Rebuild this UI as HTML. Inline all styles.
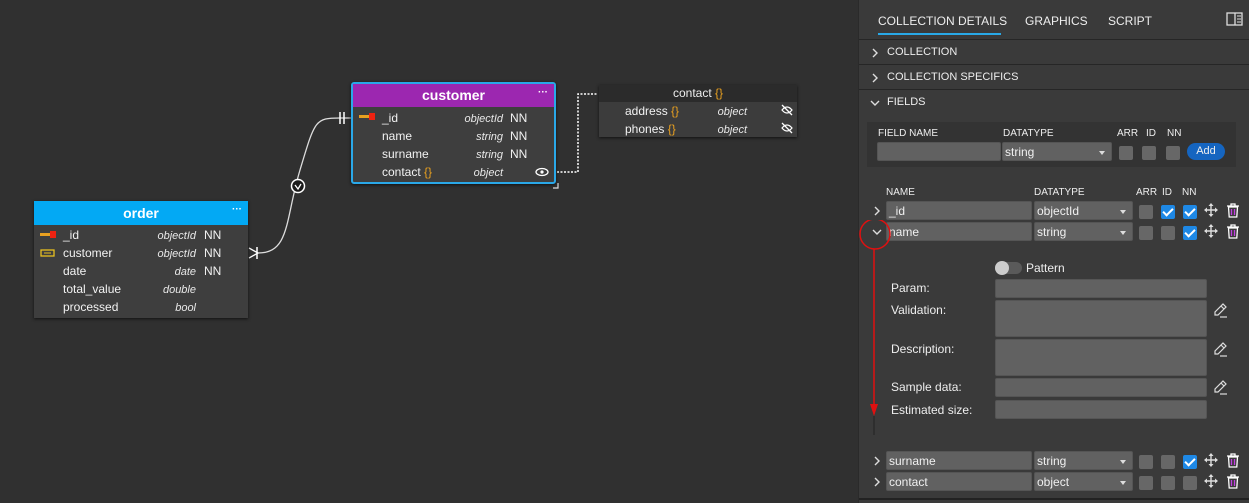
<!DOCTYPE html>
<html><head><meta charset="utf-8"><style>
*{box-sizing:border-box;margin:0;padding:0}
body{width:1249px;height:503px;background:#303030;font-family:"Liberation Sans","DejaVu Sans",sans-serif;font-size:12px;color:#eee;position:relative;overflow:hidden}
.a{position:absolute}
.tbl{position:absolute;background:#3e3e3e;box-shadow:0 1px 3px #111}
.hd{position:absolute;left:0;right:0;top:0;text-align:center;font-weight:bold;font-size:14px;color:#fff}
.r{position:absolute;font-size:12px;line-height:14px;color:#f2f2f2;white-space:nowrap}
.t{position:absolute;font-style:italic;font-size:11px;line-height:14px;color:#e8e8e8;text-align:right;margin-top:1px}
.br{color:#e8a020}
.panel{position:absolute;left:858px;top:0;width:391px;height:503px;background:#3a3a3a;border-left:1px solid #2a2a2a}
.sep{position:absolute;left:0;right:0;height:1px;background:#262626}
.inp{position:absolute;background:#616161;border:1px solid #555;border-radius:2px;color:#f0f0f0;font-size:12px;padding:2px 2px;line-height:14px}
.cb{position:absolute;width:14px;height:14px;background:#676767;border-radius:2px}
.cb.on{background:#1e88e5}
.cb.on:after{content:"";position:absolute;left:4px;top:1px;width:4px;height:8px;border:solid #fff;border-width:0 2px 2px 0;transform:rotate(45deg)}
.sel:after{content:"";position:absolute;right:6px;top:8px;border:3px solid transparent;border-top:4px solid #ddd}
.lbl{position:absolute;font-size:10px;color:#eee}
.chev{position:absolute}
</style></head><body>

<svg width="0" height="0" style="position:absolute">
<defs>
<g id="mv"><path d="M7 1 V13 M1 7 H13" stroke="#ddd" stroke-width="1.4"/><path d="M7 0 L4.5 3 H9.5Z M7 14 L4.5 11 H9.5Z M0 7 L3 4.5 V9.5Z M14 7 L11 4.5 V9.5Z" fill="#ddd"/></g>
<g id="tr"><path d="M1 3 H13 M5 3 V1 H9 V3" stroke="#fff" stroke-width="1.3" fill="none"/><path d="M2.5 4 H11.5 L10.8 14 H3.2Z" fill="none" stroke="#fff" stroke-width="1.3"/><path d="M5.5 6 V12 M8.5 6 V12" stroke="#c040e0" stroke-width="1.3"/></g>
<g id="cr"><path d="M1 1 L5 5 L1 9" stroke="#ddd" stroke-width="1.4" fill="none"/></g>
<g id="cd"><path d="M1 1 L5 5 L9 1" stroke="#ddd" stroke-width="1.4" fill="none"/></g>
<g id="pen"><path d="M3 13 L3 10 L11 2 L14 5 L6 13Z M9 4 L12 7" stroke="#ddd" stroke-width="1.2" fill="none"/><path d="M8 15 H15" stroke="#ddd" stroke-width="1.2"/></g>
</defs></svg>

<!-- connectors -->
<svg class="a" style="left:0;top:0" width="860" height="503">
<path d="M258 253 C 290 253, 285 220, 300 170 C 315 120, 315 118, 340 118 L351 118" stroke="#ddd" stroke-width="1.3" fill="none"/>
<line x1="340" y1="112" x2="340" y2="124" stroke="#fff" stroke-width="1.5"/>
<line x1="344" y1="112" x2="344" y2="124" stroke="#fff" stroke-width="1.5"/>
<line x1="257" y1="247" x2="257" y2="259" stroke="#fff" stroke-width="1.5"/>
<path d="M249 248 L258 253 L249 258" stroke="#fff" stroke-width="1.3" fill="none"/>
<circle cx="298" cy="186" r="6.5" fill="#1a1a1a" stroke="#fff" stroke-width="1.5"/>
<path d="M295 185 L298 189 L301 184" stroke="#fff" stroke-width="1.3" fill="none"/>
<path d="M557 172 L578 172 L578 94 L598 94" stroke="#fff" stroke-width="1.5" stroke-dasharray="2 1.5" fill="none"/>
<path d="M553 188 L558 188 L558 183" stroke="#ddd" stroke-width="1.2" fill="none"/>
</svg>

<!-- customer -->
<div class="tbl" style="left:351px;top:82px;width:205px;height:102px;border:2px solid #2aa8e8;border-radius:3px">
<div class="hd" style="background:#9c27b0;height:23px;line-height:23px">customer<span style="position:absolute;right:6px;font-size:10px;top:-3px">···</span></div>
<svg class="a" style="left:6px;top:29px" width="16" height="8"><rect x="0" y="2" width="10" height="3" fill="#e8a020"/><rect x="10" y="0" width="6" height="7" fill="#e21"/></svg>
<div class="r" style="left:29px;top:27px">_id</div><div class="t" style="left:80px;width:70px;top:27px">objectId</div><div class="r" style="left:157px;top:27px">NN</div>
<div class="r" style="left:29px;top:45px">name</div><div class="t" style="left:80px;width:70px;top:45px">string</div><div class="r" style="left:157px;top:45px">NN</div>
<div class="r" style="left:29px;top:63px">surname</div><div class="t" style="left:80px;width:70px;top:63px">string</div><div class="r" style="left:157px;top:63px">NN</div>
<div class="r" style="left:29px;top:81px">contact <span class="br">{}</span></div><div class="t" style="left:80px;width:70px;top:81px">object</div>
<svg class="a" style="left:182px;top:83px" width="14" height="10"><ellipse cx="7" cy="5" rx="6" ry="3.5" fill="none" stroke="#fff" stroke-width="1.3"/><circle cx="7" cy="5" r="1.6" fill="#fff"/></svg>
</div>

<!-- contact -->
<div class="tbl" style="left:599px;top:85px;width:198px;height:52px;background:#3c3c3c">
<div style="position:absolute;left:0;right:0;top:0;height:17px;background:#2b2b2b;text-align:center;font-size:12px;line-height:17px">contact <span class="br">{}</span></div>
<div class="r" style="left:26px;top:19px">address <span class="br">{}</span></div><div class="t" style="left:100px;width:48px;top:19px">object</div>
<svg class="a" style="left:182px;top:19px" width="12" height="12"><path d="M1 6 Q6 0 11 6 Q6 12 1 6Z" fill="none" stroke="#fff" stroke-width="1.2"/><line x1="1" y1="1" x2="11" y2="11" stroke="#fff" stroke-width="1.3"/></svg>
<div class="r" style="left:26px;top:37px">phones <span class="br">{}</span></div><div class="t" style="left:100px;width:48px;top:37px">object</div>
<svg class="a" style="left:182px;top:37px" width="12" height="12"><path d="M1 6 Q6 0 11 6 Q6 12 1 6Z" fill="none" stroke="#fff" stroke-width="1.2"/><line x1="1" y1="1" x2="11" y2="11" stroke="#fff" stroke-width="1.3"/></svg>
</div>

<!-- order -->
<div class="tbl" style="left:34px;top:201px;width:214px;height:117px">
<div class="hd" style="background:#03a9f4;height:24px;line-height:24px">order<span style="position:absolute;right:6px;font-size:10px;top:-3px">···</span></div>
<svg class="a" style="left:6px;top:30px" width="16" height="8"><rect x="0" y="2" width="10" height="3" fill="#e8a020"/><rect x="10" y="0" width="6" height="7" fill="#e21"/></svg>
<svg class="a" style="left:6px;top:48px" width="16" height="8"><rect x="1" y="1" width="13" height="6" fill="none" stroke="#e8c020" stroke-width="1.3"/><line x1="4" y1="4" x2="11" y2="4" stroke="#e8c020"/></svg>
<div class="r" style="left:29px;top:27px">_id</div><div class="t" style="left:90px;width:72px;top:27px">objectId</div><div class="r" style="left:170px;top:27px">NN</div>
<div class="r" style="left:29px;top:45px">customer</div><div class="t" style="left:90px;width:72px;top:45px">objectId</div><div class="r" style="left:170px;top:45px">NN</div>
<div class="r" style="left:29px;top:63px">date</div><div class="t" style="left:90px;width:72px;top:63px">date</div><div class="r" style="left:170px;top:63px">NN</div>
<div class="r" style="left:29px;top:81px">total_value</div><div class="t" style="left:90px;width:72px;top:81px">double</div>
<div class="r" style="left:29px;top:99px">processed</div><div class="t" style="left:90px;width:72px;top:99px">bool</div>
</div>

<!-- panel -->
<div class="panel">
<div class="a" style="left:19px;top:14px;font-size:12px">COLLECTION DETAILS</div>
<div class="a" style="left:19px;top:33px;width:123px;height:2px;background:#29a9e8"></div>
<div class="a" style="left:166px;top:14px;font-size:12px">GRAPHICS</div>
<div class="a" style="left:249px;top:14px;font-size:12px">SCRIPT</div>
<svg class="a" style="left:367px;top:12px" width="17" height="14"><rect x="1" y="1" width="15" height="12" fill="none" stroke="#ddd" stroke-width="1.3"/><line x1="9" y1="1" x2="9" y2="13" stroke="#ddd" stroke-width="1.3"/><line x1="11" y1="4" x2="15" y2="4" stroke="#ddd"/><line x1="11" y1="7" x2="15" y2="7" stroke="#ddd"/><line x1="11" y1="10" x2="15" y2="10" stroke="#ddd"/></svg>
<div class="sep" style="top:39px"></div>
<svg class="chev" style="left:13px;top:48px" width="8" height="11"><use href="#cr"/></svg><div class="a" style="left:28px;top:46px;font-size:11px">COLLECTION</div>
<div class="sep" style="top:64px"></div>
<svg class="chev" style="left:13px;top:73px" width="8" height="11"><use href="#cr"/></svg><div class="a" style="left:28px;top:71px;font-size:11px">COLLECTION SPECIFICS</div>
<div class="sep" style="top:89px"></div>
<svg class="chev" style="left:11px;top:100px" width="11" height="8"><use href="#cd"/></svg><div class="a" style="left:28px;top:96px;font-size:11px">FIELDS</div>

<div class="a" style="left:8px;top:122px;width:369px;height:45px;background:#333"></div>
<div class="lbl" style="left:19px;top:128px">FIELD NAME</div>
<div class="lbl" style="left:144px;top:128px">DATATYPE</div>
<div class="lbl" style="left:258px;top:128px">ARR</div><div class="lbl" style="left:287px;top:128px">ID</div><div class="lbl" style="left:308px;top:128px">NN</div>
<div class="inp" style="left:18px;top:142px;width:124px;height:19px"></div>
<div class="inp sel" style="left:143px;top:142px;width:110px;height:19px">string</div>
<div class="cb" style="left:260px;top:146px"></div><div class="cb" style="left:283px;top:146px"></div><div class="cb" style="left:307px;top:146px"></div>
<div class="a" style="left:328px;top:143px;width:38px;height:17px;background:#1565c0;border-radius:9px;font-size:11px;text-align:center;line-height:17px">Add</div>

<div class="lbl" style="left:27px;top:187px">NAME</div>
<div class="lbl" style="left:175px;top:187px">DATATYPE</div>
<div class="lbl" style="left:277px;top:187px">ARR</div><div class="lbl" style="left:303px;top:187px">ID</div><div class="lbl" style="left:323px;top:187px">NN</div>

<!-- rows -->
<svg class="chev" style="left:15px;top:206px" width="8" height="11"><use href="#cr"/></svg>
<div class="inp" style="left:27px;top:201px;width:146px;height:19px">_id</div>
<div class="inp sel" style="left:175px;top:201px;width:99px;height:19px">objectId</div>
<div class="cb" style="left:280px;top:205px"></div><div class="cb on" style="left:302px;top:205px"></div><div class="cb on" style="left:324px;top:205px"></div>
<svg class="a" style="left:345px;top:203px" width="14" height="14"><use href="#mv"/></svg><svg class="a" style="left:367px;top:203px" width="14" height="15"><use href="#tr"/></svg>

<svg class="chev" style="left:13px;top:229px" width="11" height="8"><use href="#cd"/></svg>
<div class="inp" style="left:27px;top:222px;width:146px;height:19px">name</div>
<div class="inp sel" style="left:175px;top:222px;width:99px;height:19px">string</div>
<div class="cb" style="left:280px;top:226px"></div><div class="cb" style="left:302px;top:226px"></div><div class="cb on" style="left:324px;top:226px"></div>
<svg class="a" style="left:345px;top:224px" width="14" height="14"><use href="#mv"/></svg><svg class="a" style="left:367px;top:224px" width="14" height="15"><use href="#tr"/></svg>

<svg class="a" style="left:0;top:220px" width="40" height="220"><circle cx="16" cy="14" r="15" fill="none" stroke="#e01010" stroke-width="1.5"/><line x1="15" y1="29" x2="15" y2="188" stroke="#e01010" stroke-width="1.5"/><path d="M11 184 L15 196 L19 184 Z" fill="#e01010"/><line x1="15" y1="196" x2="15" y2="215" stroke="#222" stroke-width="1"/></svg>

<div class="a" style="left:136px;top:262px;width:27px;height:12px;background:#5a5a5a;border-radius:6px"></div>
<div class="a" style="left:136px;top:261px;width:14px;height:14px;background:#ccc;border-radius:7px"></div>
<div class="a" style="left:167px;top:261px;font-size:12px">Pattern</div>
<div class="a" style="left:32px;top:281px">Param:</div>
<div class="inp" style="left:136px;top:279px;width:212px;height:19px"></div>
<div class="a" style="left:32px;top:303px">Validation:</div>
<div class="inp" style="left:136px;top:300px;width:212px;height:37px"></div>
<div class="a" style="left:32px;top:342px">Description:</div>
<div class="inp" style="left:136px;top:339px;width:212px;height:37px"></div>
<div class="a" style="left:32px;top:380px">Sample data:</div>
<div class="inp" style="left:136px;top:378px;width:212px;height:19px"></div>
<div class="a" style="left:32px;top:403px">Estimated size:</div>
<div class="inp" style="left:136px;top:400px;width:212px;height:19px"></div>
<svg class="a" style="left:353px;top:302px" width="16" height="16"><use href="#pen"/></svg>
<svg class="a" style="left:353px;top:341px" width="16" height="16"><use href="#pen"/></svg>
<svg class="a" style="left:353px;top:379px" width="16" height="16"><use href="#pen"/></svg>

<svg class="chev" style="left:15px;top:456px" width="8" height="11"><use href="#cr"/></svg>
<div class="inp" style="left:27px;top:451px;width:146px;height:19px">surname</div>
<div class="inp sel" style="left:175px;top:451px;width:99px;height:19px">string</div>
<div class="cb" style="left:280px;top:455px"></div><div class="cb" style="left:302px;top:455px"></div><div class="cb on" style="left:324px;top:455px"></div>
<svg class="a" style="left:345px;top:453px" width="14" height="14"><use href="#mv"/></svg><svg class="a" style="left:367px;top:453px" width="14" height="15"><use href="#tr"/></svg>

<svg class="chev" style="left:15px;top:477px" width="8" height="11"><use href="#cr"/></svg>
<div class="inp" style="left:27px;top:472px;width:146px;height:19px">contact</div>
<div class="inp sel" style="left:175px;top:472px;width:99px;height:19px">object</div>
<div class="cb" style="left:280px;top:476px"></div><div class="cb" style="left:302px;top:476px"></div><div class="cb" style="left:324px;top:476px"></div>
<svg class="a" style="left:345px;top:474px" width="14" height="14"><use href="#mv"/></svg><svg class="a" style="left:367px;top:474px" width="14" height="15"><use href="#tr"/></svg>
<div class="sep" style="top:498px;background:#222;height:2px"></div>
</div>
</body></html>
